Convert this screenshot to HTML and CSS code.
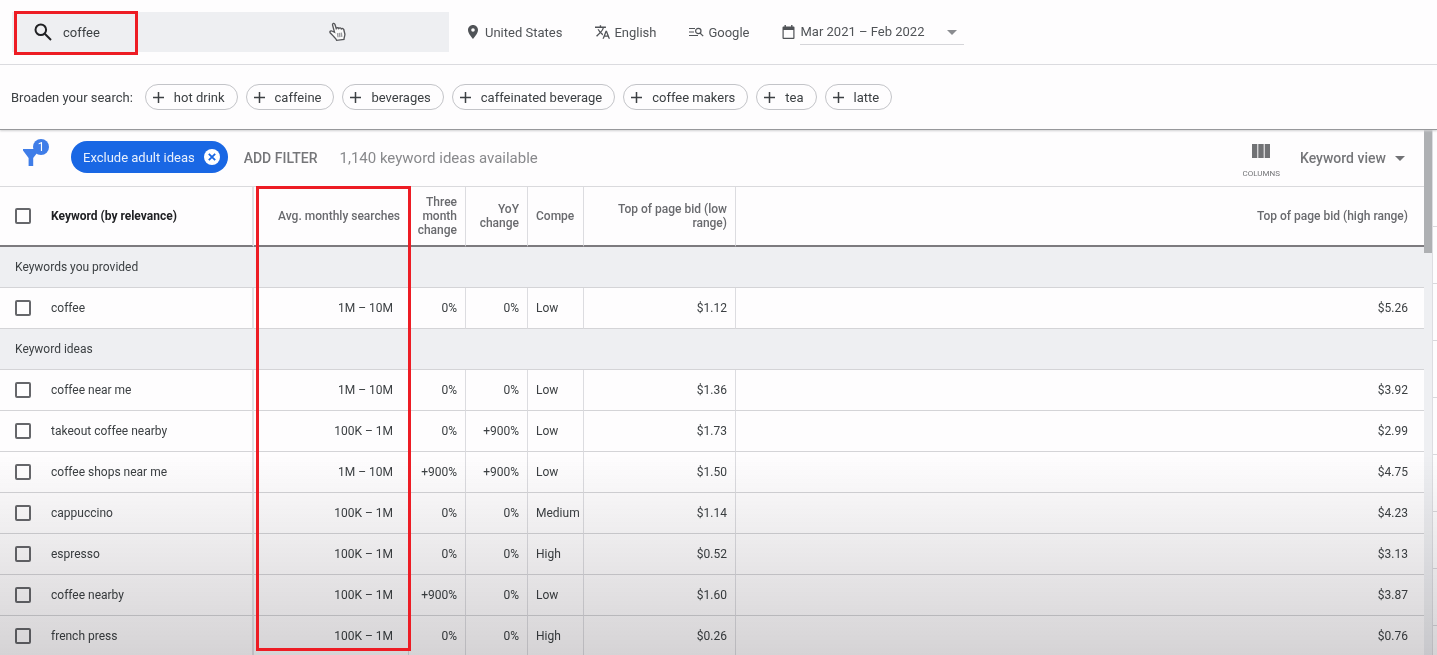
FILE: index.html
```html
<!DOCTYPE html>
<html lang="en">
<head>
<meta charset="utf-8">
<title>Keyword ideas</title>
<link rel="stylesheet" href="styles.css">
</head>
<body>
<div class="app">
  <header class="topbar">
    <div class="search">
      <svg class="search-icon" viewBox="0 0 18 18" aria-hidden="true"><circle cx="6.8" cy="6.8" r="5.3"/><path d="M10.8 10.8L17 17"/></svg>
      <input class="search-input" type="text" value="coffee" aria-label="Keywords">
      <span class="mark mark-search"></span>
      <svg class="pointer" viewBox="0 0 16 19" aria-hidden="true"><path d="M5.2 9.8L3.4 3.2C2.9 1.2 5 .6 5.6 2.4L6.8 6.2C7.4 5.1 8.8 5.2 9.2 6.2C10 5.2 11.2 5.5 11.6 6.5C12.6 5.8 13.8 6.2 14 7.4L15 11.4C15.2 13.2 14.2 14.2 14.1 16.6L7.2 17.4C6.8 15.6 5 14.6 3.4 12.7L1 10.2C.3 8.9 1.8 8 3.2 8.8Z"/><path class="pointer-lines" d="M8 10.5L8.5 14.5M9.8 10.3L10.3 14.3M11.6 10.1L12.1 14.1"/></svg>
    </div>
    <nav class="settings" aria-label="Targeting">
      <button class="setting" type="button">
        <svg class="pin-icon" viewBox="0 0 10 14" aria-hidden="true"><path fill-rule="evenodd" d="M5 0C2.2 0 0 2.2 0 5C0 8.6 5 14 5 14S10 8.6 10 5C10 2.2 7.8 0 5 0ZM5 6.8A1.8 1.8 0 1 1 5 3.2A1.8 1.8 0 0 1 5 6.8Z"/></svg>
        United States
      </button>
      <button class="setting tight" type="button">
        <svg class="lang-icon" viewBox="1 2 22 20" aria-hidden="true"><path d="M12.87 15.07l-2.54-2.51.03-.03A17.52 17.52 0 0 0 14.07 6H17V4h-7V2H8v2H1v2h11.17C11.5 7.92 10.44 9.75 9 11.35 8.07 10.32 7.3 9.19 6.69 8h-2c.73 1.63 1.73 3.17 2.98 4.56l-5.09 5.02L4 19l5-5 3.11 3.11.76-2.04zM18.5 10h-2L12 22h2l1.12-3h4.75L21 22h2l-4.5-12zm-2.62 7l1.62-4.33L19.12 17h-3.24z"/></svg>
        English
      </button>
      <button class="setting tight" type="button">
        <svg class="network-icon" viewBox="0 0 15 12" aria-hidden="true"><path d="M0 2.5H6M0 6H5M0 9.5H9"/><circle cx="9.3" cy="5" r="2.7"/><path d="M11 7L14.2 10.2"/></svg>
        Google
      </button>
      <div class="period">
        <svg class="calendar-icon" viewBox="0 0 12 14" aria-hidden="true"><path fill-rule="evenodd" d="M2 0H3.4V1.4H8.6V0H10V1.4H11A1 1 0 0 1 12 2.4V13A1 1 0 0 1 11 14H1A1 1 0 0 1 0 13V2.4A1 1 0 0 1 1 1.4H2ZM1.2 5V12.8H10.8V5Z"/></svg>
        <label class="period-field">
          <select class="period-select" aria-label="Date range"><option>Mar 2021 – Feb 2022</option></select>
          <svg class="arrow period-arrow" viewBox="0 0 10 5" aria-hidden="true"><path d="M0 0H10L5 5Z"/></svg>
        </label>
      </div>
    </nav>
  </header>

  <section class="broaden">
    <span class="broaden-label">Broaden your search:</span>
    <button class="chip" type="button"><svg class="plus" viewBox="0 0 11 11" aria-hidden="true"><path d="M5.5 0V11M0 5.5H11"/></svg>hot drink</button>
    <button class="chip" type="button"><svg class="plus" viewBox="0 0 11 11" aria-hidden="true"><path d="M5.5 0V11M0 5.5H11"/></svg>caffeine</button>
    <button class="chip" type="button"><svg class="plus" viewBox="0 0 11 11" aria-hidden="true"><path d="M5.5 0V11M0 5.5H11"/></svg>beverages</button>
    <button class="chip" type="button"><svg class="plus" viewBox="0 0 11 11" aria-hidden="true"><path d="M5.5 0V11M0 5.5H11"/></svg>caffeinated beverage</button>
    <button class="chip" type="button"><svg class="plus" viewBox="0 0 11 11" aria-hidden="true"><path d="M5.5 0V11M0 5.5H11"/></svg>coffee makers</button>
    <button class="chip" type="button"><svg class="plus" viewBox="0 0 11 11" aria-hidden="true"><path d="M5.5 0V11M0 5.5H11"/></svg>tea</button>
    <button class="chip" type="button"><svg class="plus" viewBox="0 0 11 11" aria-hidden="true"><path d="M5.5 0V11M0 5.5H11"/></svg>latte</button>
  </section>

  <main class="results">
    <div class="panel">
      <div class="toolbar">
        <button class="filter" type="button" aria-label="Filters">
          <svg class="funnel" viewBox="0 0 16 17" aria-hidden="true"><path d="M0 0H16V1.6L10.2 9V17H5.6V9L0 1.6Z"/></svg>
          <span class="badge">1</span>
        </button>
        <button class="filter-chip" type="button">Exclude adult ideas
          <svg class="close" viewBox="0 0 16 16" aria-hidden="true"><circle cx="8" cy="8" r="8"/><path d="M4.8 4.8L11.2 11.2M11.2 4.8L4.8 11.2"/></svg>
        </button>
        <button class="add-filter" type="button">ADD FILTER</button>
        <span class="count">1,140 keyword ideas available</span>
        <button class="columns" type="button">
          <svg class="columns-icon" viewBox="0 0 18 14" aria-hidden="true"><path d="M0 0H5.3V14H0ZM6.3 0H11.7V14H6.3ZM12.7 0H18V14H12.7Z"/></svg>
          COLUMNS
        </button>
        <label class="view">
          <select class="view-select" aria-label="View"><option>Keyword view</option></select>
          <svg class="arrow view-arrow" viewBox="0 0 10 5" aria-hidden="true"><path d="M0 0H10L5 5Z"/></svg>
        </label>
      </div>

      <div class="table-area">
        <table class="ideas">
          <colgroup><col class="c-key"><col class="c-avg"><col class="c-three"><col class="c-yoy"><col class="c-comp"><col class="c-low"><col></colgroup>
          <thead>
            <tr>
              <th class="key"><label class="pick"><input type="checkbox" class="box">Keyword (by relevance)</label></th>
              <th>Avg. monthly searches</th><th>Three month change</th><th>YoY change</th><th class="comp">Compe</th><th>Top of page bid (low range)</th><th class="high">Top of page bid (high range)</th>
            </tr>
          </thead>
          <tbody>
            <tr class="group"><td colspan="7">Keywords you provided</td></tr>
            <tr><td class="key"><label class="pick"><input type="checkbox" class="box">coffee</label></td><td class="avg">1M – 10M</td><td>0%</td><td>0%</td><td class="comp">Low</td><td>$1.12</td><td class="high">$5.26</td></tr>
            <tr class="group"><td colspan="7">Keyword ideas</td></tr>
            <tr><td class="key"><label class="pick"><input type="checkbox" class="box">coffee near me</label></td><td class="avg">1M – 10M</td><td>0%</td><td>0%</td><td class="comp">Low</td><td>$1.36</td><td class="high">$3.92</td></tr>
            <tr><td class="key"><label class="pick"><input type="checkbox" class="box">takeout coffee nearby</label></td><td class="avg">100K – 1M</td><td>0%</td><td>+900%</td><td class="comp">Low</td><td>$1.73</td><td class="high">$2.99</td></tr>
            <tr><td class="key"><label class="pick"><input type="checkbox" class="box">coffee shops near me</label></td><td class="avg">1M – 10M</td><td>+900%</td><td>+900%</td><td class="comp">Low</td><td>$1.50</td><td class="high">$4.75</td></tr>
            <tr><td class="key"><label class="pick"><input type="checkbox" class="box">cappuccino</label></td><td class="avg">100K – 1M</td><td>0%</td><td>0%</td><td class="comp">Medium</td><td>$1.14</td><td class="high">$4.23</td></tr>
            <tr><td class="key"><label class="pick"><input type="checkbox" class="box">espresso</label></td><td class="avg">100K – 1M</td><td>0%</td><td>0%</td><td class="comp">High</td><td>$0.52</td><td class="high">$3.13</td></tr>
            <tr><td class="key"><label class="pick"><input type="checkbox" class="box">coffee nearby</label></td><td class="avg">100K – 1M</td><td>+900%</td><td>0%</td><td class="comp">Low</td><td>$1.60</td><td class="high">$3.87</td></tr>
            <tr><td class="key"><label class="pick"><input type="checkbox" class="box">french press</label></td><td class="avg">100K – 1M</td><td>0%</td><td>0%</td><td class="comp">High</td><td>$0.26</td><td class="high">$0.76</td></tr>
          </tbody>
        </table>
        <span class="mark mark-column"></span>
      </div>
    </div>
    <div class="track"><div class="thumb"></div></div>
    <div class="edge"></div>
    <div class="shade"></div>
  </main>
</div>
</body>
</html>
```

FILE: styles.css
```css
* { box-sizing: border-box; }

body {
  margin: 0;
  font-family: Roboto, "Liberation Sans", sans-serif;
  font-size: 13px;
  color: #3c4043;
  background: #fefdfe;
}

button, select, input { font: inherit; color: inherit; }
button { padding: 0; border: 0; background: none; white-space: nowrap; }
select { appearance: none; border: 0; background: none; padding: 0; }
svg { display: block; flex: none; }

.app { display: flex; flex-direction: column; height: 100vh; overflow: hidden; }

/* Top bar */
.topbar {
  display: flex;
  flex: none;
  align-items: center;
  height: 65px;
  padding-left: 12px;
  border-bottom: 1px solid #dcdce0;
}
.search {
  position: relative;
  display: flex;
  align-items: center;
  gap: 11px;
  width: 437px;
  height: 40px;
  padding-left: 22px;
  background: #eeeff2;
}
.search-icon { width: 18px; height: 18px; fill: none; stroke: #202124; stroke-width: 2; }
.search-input { flex: 1; min-width: 0; border: 0; padding: 0; background: none; outline: 0; }
.pointer { position: absolute; left: 317px; top: 10px; width: 17px; height: 20px; fill: #fbfbfb; stroke: #55565a; stroke-width: 1.3; }
.pointer-lines { stroke: #9b9ca0; }
.mark { position: absolute; z-index: 2; border: 3px solid #ed1c24; pointer-events: none; }
.mark-search { left: 2px; top: -1px; width: 124px; height: 44px; }

.settings { display: flex; align-items: center; gap: 33px; padding-left: 19px; color: #505357; }
.setting { display: flex; align-items: center; gap: 7px; }
.tight { gap: 4px; }
.settings svg { fill: #505357; }
.pin-icon { width: 10px; height: 14px; }
.lang-icon { width: 15px; height: 14px; }
.settings .network-icon { width: 15px; height: 12px; fill: none; stroke: #505357; stroke-width: 1.2; }
.period { display: flex; align-items: center; gap: 5px; }
.calendar-icon { width: 13px; height: 14px; }
.period-field { position: relative; width: 164px; }
.period-select { display: block; width: 100%; height: 26px; border-bottom: 1px solid #d5d5d9; }
.arrow { position: absolute; width: 10px; height: 5px; pointer-events: none; }
.settings .period-arrow { right: 7px; top: 11px; fill: #8a8c90; }

/* Suggestions */
.broaden {
  display: flex;
  flex: none;
  align-items: center;
  gap: 8px;
  height: 65px;
  padding-left: 11px;
  border-bottom: 1px solid #97989b;
  box-shadow: 0 1px 2px #d0d0d2;
  z-index: 1;
}
.broaden-label { margin-right: 4px; }
.chip {
  display: flex;
  align-items: center;
  gap: 10px;
  height: 26px;
  padding: 0 12px 0 7px;
  border: 1px solid #c3c4c8;
  border-radius: 13px;
}
.plus { width: 11px; height: 11px; stroke: #3c4043; stroke-width: 1.5; }

/* Results */
.results { position: relative; display: flex; flex: 1; min-height: 0; }
.panel { flex: 1; min-width: 0; }
.toolbar {
  display: flex;
  align-items: center;
  height: 57px;
  padding: 0 19px 2px 23px;
  border-bottom: 1px solid #dadadd;
  color: #757679;
}
.filter { position: relative; width: 26px; height: 17px; margin-right: 22px; }
.funnel { width: 16px; height: 17px; fill: #3f7de8; }
.badge {
  position: absolute;
  right: 0;
  top: -10px;
  width: 16px;
  height: 16px;
  border-radius: 50%;
  background: #3f7de8;
  color: #fff;
  font-size: 12px;
  line-height: 16px;
}
.filter-chip {
  display: flex;
  align-items: center;
  gap: 9px;
  height: 32px;
  padding: 0 8px 0 12px;
  border-radius: 16px;
  background: #1967e4;
  color: #e9f0fd;
}
.close { width: 16px; height: 16px; fill: #fff; stroke: none; }
.close path { stroke: #1967e4; stroke-width: 1.8; }
.add-filter { margin: 2px 22px 0 16px; font-size: 14px; font-weight: 500; }
.count { padding-top: 2px; font-size: 15px; color: #88898c; }
.columns {
  display: flex;
  flex-direction: column;
  align-items: center;
  gap: 12px;
  margin: 8px 20px 0 auto;
  font-size: 8px;
  line-height: 8px;
}
.columns-icon { width: 18px; height: 14px; fill: #717275; }
.view { position: relative; width: 105px; padding-top: 2px; }
.view-select { width: 100%; font-size: 14px; font-weight: 500; }
.view-arrow { right: 0; top: 8px; fill: #717275; }

.table-area { position: relative; }
.ideas { width: 100%; table-layout: fixed; border-collapse: separate; border-spacing: 0; font-size: 12px; }
.c-key { width: 254px; }
.c-avg { width: 155px; }
.c-three { width: 57px; }
.c-yoy { width: 62px; }
.c-comp { width: 56px; }
.c-low { width: 152px; }
.ideas th, .ideas td { padding: 0 8px; text-align: right; border-right: 1px solid #dcdce0; }
.ideas th { height: 60px; line-height: 14px; font-weight: 500; color: #696a6e; border-bottom: 2px solid #7c7a7e; }
.ideas td { height: 41px; border-bottom: 1px solid #d4d4d7; }
.ideas .key { padding-left: 15px; text-align: left; border-right: 2px solid #e2e2e5; }
.ideas th.key { font-weight: 700; color: #202124; }
.ideas .avg { padding-right: 15px; }
.ideas .comp { padding-right: 0; text-align: left; }
.ideas .high { padding-right: 16px; border-right: 0; }
.ideas .group td { padding-left: 15px; text-align: left; background: #eeeff2; border-right: 0; }
.pick { display: flex; align-items: center; gap: 20px; }
.box { appearance: none; flex: none; width: 16px; height: 16px; margin: 0; border: 2px solid #66676b; border-radius: 2px; }
.mark-column { left: 256px; top: -1px; width: 155px; height: 465px; }

.track { width: 8px; background: #eeeff2; }
.thumb { height: 123px; background: #aeb0b3; }
.edge {
  width: 5px;
  padding-top: 40px;
  border-left: 1px solid #dddde1;
  background: repeating-linear-gradient(transparent 0, transparent 56px, #d8d8dc 56px, #d8d8dc 57px) content-box;
}
.shade {
  position: absolute;
  inset: auto 0 0;
  height: 200px;
  background: linear-gradient(rgba(30, 24, 30, 0), rgba(30, 24, 30, 0.18));
  mix-blend-mode: multiply;
  pointer-events: none;
}
```
